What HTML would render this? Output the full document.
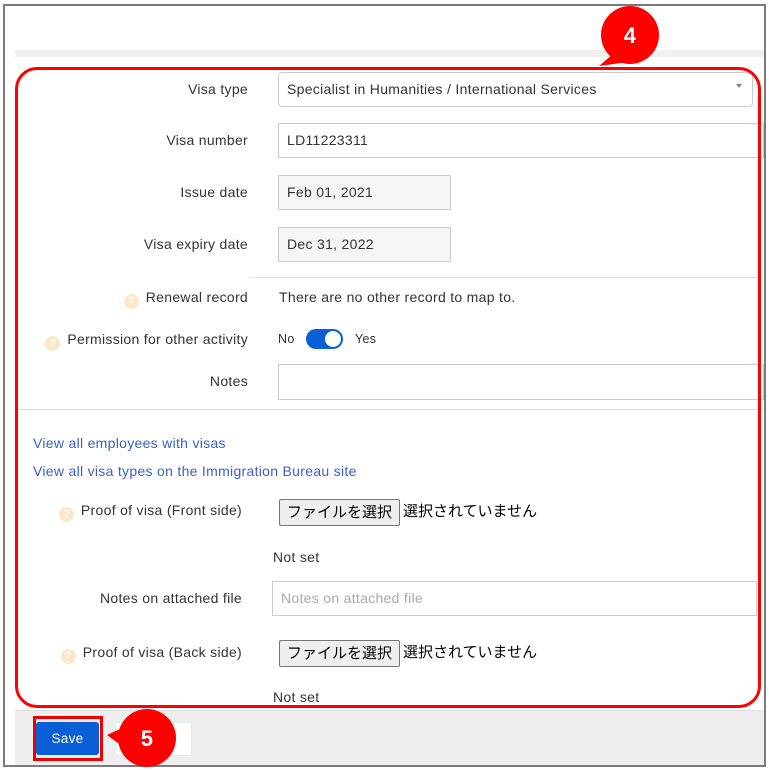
<!DOCTYPE html>
<html><head><meta charset="utf-8"><style>
*{box-sizing:border-box;margin:0;padding:0}
body{width:769px;height:770px;background:#fff;position:relative;overflow:hidden;font-family:"Liberation Sans","Noto Sans CJK JP",sans-serif;font-size:14px;letter-spacing:0.3px;color:#333}
.a{position:absolute}
.lbl{position:absolute;text-align:right;white-space:nowrap;line-height:16px}
.in{position:absolute;border:1px solid #ccc;background:#fff;padding-left:8px;line-height:33px;white-space:nowrap}
.q{display:inline-block;width:15px;height:15px;border-radius:50%;background:#fde7c8;color:#fff;font-size:10px;text-align:center;line-height:15px;font-weight:bold;margin-right:7px;vertical-align:-2px;letter-spacing:0}
.fb{position:absolute;width:121px;height:27px;border:1px solid #767676;background:#efefef;font-size:15px;line-height:25px;text-align:center;color:#000;border-radius:2px;letter-spacing:0}
.ft{position:absolute;font-size:15px;color:#000;line-height:27px;letter-spacing:0}
a{color:#3a5fcd;text-decoration:none}
</style></head><body>
<div class="a" style="left:3px;top:4px;width:763px;height:763px;border:2px solid #7a7a7a"></div>
<div class="a" style="left:15px;top:50px;width:749px;height:7px;background:#f0f0f0"></div>

<div class="lbl" style="right:521px;top:81px">Visa type</div>
<div class="in" style="left:278px;top:72px;width:475px;height:35px;border-radius:4px">Specialist in Humanities / International Services</div>
<div class="a" style="left:736px;top:84px;width:0;height:0;border-left:3px solid transparent;border-right:3px solid transparent;border-top:4px solid #888"></div>

<div class="lbl" style="right:521px;top:132px">Visa number</div>
<div class="in" style="left:278px;top:123px;width:486px;height:35px">LD11223311</div>

<div class="lbl" style="right:521px;top:184px">Issue date</div>
<div class="in" style="left:278px;top:175px;width:173px;height:35px;background:#f5f5f5">Feb 01, 2021</div>

<div class="lbl" style="right:521px;top:236px">Visa expiry date</div>
<div class="in" style="left:278px;top:227px;width:173px;height:35px;background:#f5f5f5">Dec 31, 2022</div>

<div class="a" style="left:250px;top:277px;width:514px;height:1px;background:#e2e2e2"></div>

<div class="lbl" style="right:521px;top:289px"><span class="q">?</span>Renewal record</div>
<div class="a" style="left:279px;top:289px;line-height:16px">There are no other record to map to.</div>

<div class="lbl" style="right:521px;top:331px"><span class="q">?</span>Permission for other activity</div>
<div class="a" style="left:278px;top:331px;line-height:16px;font-size:12.5px">No</div>
<div class="a" style="left:306px;top:329px;width:37px;height:20px;border-radius:10px;background:#0b5fd6"></div>
<div class="a" style="left:325px;top:331px;width:16px;height:16px;border-radius:50%;background:#fff"></div>
<div class="a" style="left:355px;top:331px;line-height:16px;font-size:12.5px">Yes</div>

<div class="lbl" style="right:521px;top:373px">Notes</div>
<div class="in" style="left:278px;top:364px;width:486px;height:36px"></div>

<div class="a" style="left:15px;top:409px;width:749px;height:1px;background:#ddd"></div>

<div class="a" style="left:33px;top:435px;line-height:16px"><a>View all employees with visas</a></div>
<div class="a" style="left:33px;top:463px;line-height:16px"><a>View all visa types on the Immigration Bureau site</a></div>

<div class="lbl" style="right:527px;top:502px"><span class="q">?</span>Proof of visa (Front side)</div>
<div class="fb" style="left:279px;top:499px">ファイルを選択</div>
<div class="ft" style="left:403px;top:498px">選択されていません</div>
<div class="a" style="left:273px;top:549px;line-height:16px">Not set</div>

<div class="lbl" style="right:527px;top:590px">Notes on attached file</div>
<div class="in" style="left:272px;top:581px;width:485px;height:35px;color:#aaa">Notes on attached file</div>

<div class="lbl" style="right:527px;top:644px"><span class="q">?</span>Proof of visa (Back side)</div>
<div class="fb" style="left:279px;top:640px">ファイルを選択</div>
<div class="ft" style="left:403px;top:639px">選択されていません</div>
<div class="a" style="left:273px;top:689px;line-height:16px">Not set</div>

<div class="a" style="left:15px;top:710px;width:749px;height:55px;background:#eee;border-top:1px solid #ddd"></div>
<div class="a" style="left:115px;top:722px;width:77px;height:34px;background:#fff;border:1px solid #e2e8f5;border-radius:3px"></div>
<div class="a" style="left:36px;top:722px;width:63px;height:33px;background:#0b5fd6;border-radius:3px;color:#fff;text-align:center;line-height:33px;font-size:13.5px">Save</div>
<div class="a" style="left:33px;top:716px;width:70px;height:45px;border:3px solid #e00"></div>

<div class="a" style="left:15px;top:67px;width:746px;height:641px;border:3px solid #f00;border-radius:22px"></div>

<svg class="a" style="left:0;top:0" width="769" height="770">
<path d="M612 55 L599 66 L628 62 Z" fill="#f00"/>
<circle cx="630" cy="35" r="29" fill="#f00"/>
<text x="630" y="43" fill="#fff" font-family="Liberation Sans" font-weight="bold" font-size="22" text-anchor="middle">4</text>
<path d="M122 728 L107 735 L122 746 Z" fill="#f00"/>
<circle cx="147" cy="738" r="29" fill="#f00"/>
<text x="147" y="746" fill="#fff" font-family="Liberation Sans" font-weight="bold" font-size="22" text-anchor="middle">5</text>
</svg>
</body></html>
